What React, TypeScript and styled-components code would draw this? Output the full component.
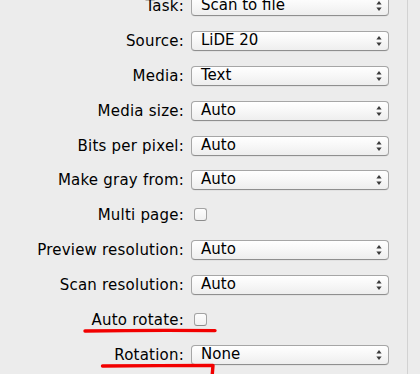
import { createGlobalStyle, styled } from 'styled-components';

const GlobalStyle = createGlobalStyle`
  html, body {
    margin: 0;
    padding: 0;
    background: #ececec;
    overflow: hidden;
  }
  body {
    font-family: "DejaVu Sans", "Liberation Sans", sans-serif;
    font-size: 15px;
    color: #000;
  }
`;

const Window = styled.div`
  position: relative;
  width: 420px;
  height: 374px;
  display: flex;
  overflow: hidden;
`;

const Pane = styled.div`
  width: 408px;
  border-right: 1px solid #d2d2d2;
  box-sizing: border-box;
`;

const Form = styled.div`
  display: flex;
  flex-direction: column;
  gap: 14.9px;
  margin-top: -4px;
`;

const Row = styled.div`
  display: flex;
  align-items: flex-start;
  height: 20px;
  gap: 7px;
`;

const Label = styled.div`
  width: 184px;
  text-align: right;
  line-height: 20px;
  letter-spacing: 0.22px;
  white-space: nowrap;
  flex-shrink: 0;
`;

const Popup = styled.div`
  position: relative;
  box-sizing: border-box;
  width: 198px;
  height: 20px;
  padding: 0 20px 2px 9px;
  line-height: 16px;
  border: 1px solid #a6a6a6;
  border-bottom-color: #8f8f8f;
  border-radius: 4px;
  background: linear-gradient(#ffffff, #f7f7f7 50%, #eeeeee);
  box-shadow: 0 0.5px 0.5px rgba(0, 0, 0, 0.08);
  white-space: nowrap;
`;

const Arrows = styled.svg`
  position: absolute;
  right: 6px;
  top: 3px;
`;

const CheckBox = styled.div`
  box-sizing: border-box;
  width: 13px;
  height: 13px;
  margin: 3px 0 0 3px;
  border: 1px solid #a3a3a3;
  border-bottom-color: #8c8c8c;
  border-radius: 3px;
  background: linear-gradient(#fdfdfd, #f1f1f1);
`;

const Marks = styled.svg`
  position: absolute;
  left: 0;
  top: 0;
  pointer-events: none;
`;

type Field =
  | { label: string; kind: 'popup'; value: string }
  | { label: string; kind: 'check' };

const fields: Field[] = [
  { label: 'Task:', kind: 'popup', value: 'Scan to file' },
  { label: 'Source:', kind: 'popup', value: 'LiDE 20' },
  { label: 'Media:', kind: 'popup', value: 'Text' },
  { label: 'Media size:', kind: 'popup', value: 'Auto' },
  { label: 'Bits per pixel:', kind: 'popup', value: 'Auto' },
  { label: 'Make gray from:', kind: 'popup', value: 'Auto' },
  { label: 'Multi page:', kind: 'check' },
  { label: 'Preview resolution:', kind: 'popup', value: 'Auto' },
  { label: 'Scan resolution:', kind: 'popup', value: 'Auto' },
  { label: 'Auto rotate:', kind: 'check' },
  { label: 'Rotation:', kind: 'popup', value: 'None' },
];

const PopupArrows = () => (
  <Arrows width="6" height="12" viewBox="0 0 6 12">
    <path d="M3 1 L5.6 4.6 H0.4 Z" fill="#3a3a3a" />
    <path d="M3 11 L5.6 7.4 H0.4 Z" fill="#3a3a3a" />
  </Arrows>
);

export default function App() {
  return (
    <Window>
      <GlobalStyle />
      <Pane>
        <Form>
          {fields.map((f) => (
            <Row key={f.label}>
              <Label>{f.label}</Label>
              {f.kind === 'popup' ? (
                <Popup>
                  {f.value}
                  <PopupArrows />
                </Popup>
              ) : (
                <CheckBox />
              )}
            </Row>
          ))}
        </Form>
      </Pane>
      <Marks width="420" height="374" viewBox="0 0 420 374">
        <path
          d="M85 331 Q150 330 215 330.6"
          stroke="#f20000"
          strokeWidth="3.4"
          strokeLinecap="round"
          fill="none"
        />
        <path
          d="M102.5 366 Q160 365.4 213 365.4 L211.8 380"
          stroke="#f20000"
          strokeWidth="3.4"
          strokeLinecap="round"
          strokeLinejoin="round"
          fill="none"
        />
      </Marks>
    </Window>
  );
}
